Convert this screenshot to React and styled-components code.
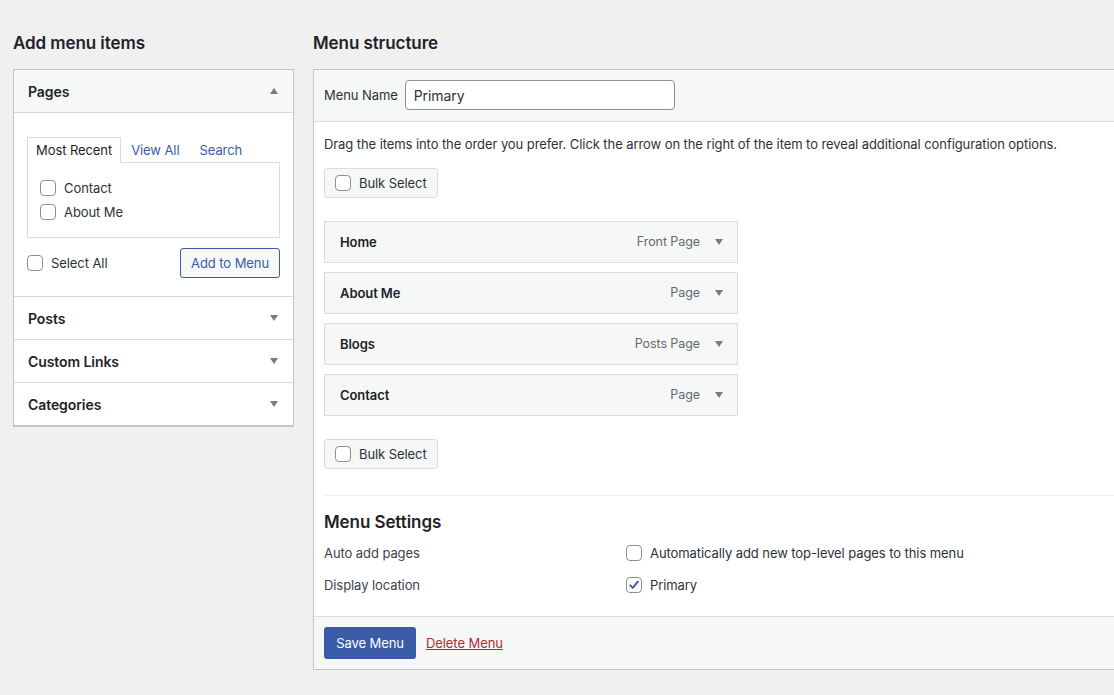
import React from "react";
import styled, { createGlobalStyle } from "styled-components";

const Global = createGlobalStyle`
  html, body { margin: 0; padding: 0; }
  body {
    background: #f0f0f1;
    font-family: Inter, "Liberation Sans", sans-serif;
    color: #1d2327;
    overflow: hidden;
    letter-spacing: -0.08px;
  }
  * { box-sizing: border-box; }
`;

const Page = styled.div`
  display: flex;
  align-items: flex-start;
  gap: 19px;
  padding: 32px 0 0 13px;
  width: 1400px;
`;

const LeftCol = styled.div`
  width: 281px;
  flex-shrink: 0;
`;

const RightCol = styled.div`
  width: 860px;
  flex-shrink: 0;
`;

const ColTitle = styled.h2`
  margin: 0 0 15px;
  font-size: 17px;
  line-height: 22px;
  font-weight: 600;
  color: #1d2327;
`;

const Accordion = styled.div`
  background: #fff;
  border: 1px solid #c3c4c7;
  border-bottom-width: 2px;
`;

const Section = styled.div`
  & + & { border-top: 1px solid #dcdcde; }
`;

const SectionHead = styled.div`
  height: ${p => (p.$open ? 43 : 42)}px;
  display: flex;
  align-items: center;
  justify-content: space-between;
  padding: 0 14px;
  font-size: 14px;
  font-weight: 600;
  background: ${p => (p.$open ? "#f6f7f7" : "#fff")};
  border-bottom: ${p => (p.$open ? "1px solid #dcdcde" : "none")};
`;

const Tri = styled.span`
  width: 0;
  height: 0;
  border-left: 4.5px solid transparent;
  border-right: 4.5px solid transparent;
  ${p => (p.$up
    ? "border-bottom: 6px solid #787c82;"
    : "border-top: 6px solid #787c82;")}
  margin-right: ${p => p.$mr || 1}px;
`;

const SectionBody = styled.div`
  padding: 24px 13px 18px;
`;

const Tabs = styled.div`
  display: flex;
  align-items: flex-end;
`;

const Tab = styled.span`
  font-size: 13px;
  line-height: 24px;
  padding: 0 8px;
  color: ${p => (p.$active ? "#1d2327" : "#3a5ca8")};
  background: ${p => (p.$active ? "#fff" : "transparent")};
  border: 1px solid ${p => (p.$active ? "#dcdcde" : "transparent")};
  border-bottom: none;
  margin-bottom: -1px;
  position: relative;
  z-index: 1;
  height: 26px;
  margin-right: ${p => (p.$active ? 1 : 2)}px;
`;

const TabPanel = styled.div`
  border: 1px solid #dcdcde;
  padding: 17px 12px 17px;
  display: flex;
  flex-direction: column;
  gap: 8px;
`;

const CheckRow = styled.label`
  display: flex;
  align-items: center;
  gap: 8px;
  font-size: 13px;
  line-height: 16px;
  color: ${p => p.$color || "#2c3338"};
`;

const Box = styled.span`
  width: 16px;
  height: 16px;
  border: 1px solid #8c8f94;
  border-radius: 4px;
  background: #fff;
  flex-shrink: 0;
  display: inline-flex;
  align-items: center;
  justify-content: center;
`;

const Check = ({ checked }) => (
  <Box>
    {checked && (
      <svg width="12" height="12" viewBox="0 0 12 12">
        <path d="M2.2 6.3 L4.8 8.9 L9.8 2.6" fill="none" stroke="#3a5ca8" strokeWidth="1.9" strokeLinecap="round" strokeLinejoin="round" />
      </svg>
    )}
  </Box>
);

const PanelFoot = styled.div`
  margin-top: 10px;
  display: flex;
  align-items: center;
  justify-content: space-between;
`;

const OutlineButton = styled.button`
  height: 30px;
  padding: 0 10px;
  font-family: inherit;
  letter-spacing: inherit;
  font-size: 13px;
  color: #3a5ca8;
  background: #f6f7f7;
  border: 1px solid #3a5ca8;
  border-radius: 3px;
`;

const Panel = styled.div`
  background: #fff;
  border: 1px solid #c3c4c7;
  border-right: none;
`;

const PanelHead = styled.div`
  height: 52px;
  display: flex;
  align-items: center;
  gap: 7px;
  padding: 0 10px 1px;
  background: #f6f7f7;
  border-bottom: 1px solid #dcdcde;
  font-size: 13px;
  color: #2c3338;
`;

const NameInput = styled.div`
  width: 270px;
  height: 30px;
  border: 1px solid #8c8f94;
  border-radius: 4px;
  background: #fff;
  display: flex;
  align-items: center;
  padding: 0 8px;
  font-size: 14px;
  color: #2c3338;
`;

const PanelBody = styled.div`
  padding: 12px 10px 0;
`;

const Hint = styled.p`
  margin: 0 0 14px;
  font-size: 13px;
  line-height: 20px;
  color: #2c3338;
`;

const BulkButton = styled.div`
  display: inline-flex;
  align-items: center;
  gap: 8px;
  height: 30px;
  padding: 0 10px;
  background: #f6f7f7;
  border: 1px solid #dcdcde;
  border-radius: 3px;
  font-size: 13px;
  color: #2c3338;
`;

const ItemList = styled.div`
  display: flex;
  flex-direction: column;
  gap: 9px;
  margin: 23px 0 23px;
`;

const Item = styled.div`
  width: 414px;
  height: 42px;
  display: flex;
  align-items: center;
  padding: 0 13px 1px 15px;
  background: #f6f7f7;
  border: 1px solid #dcdcde;
  font-size: 13px;
`;

const ItemTitle = styled.span`
  flex: 1;
  font-weight: 600;
  color: #1d2327;
`;

const ItemType = styled.span`
  color: #646970;
  font-size: 12.5px;
  margin-right: 15px;
`;

const Settings = styled.div`
  margin-top: 26px;
  border-top: 1px solid #f0f0f1;
  padding: 15px 0 15px;
`;

const SettingsTitle = styled.h3`
  margin: 0 0 4px;
  font-size: 17px;
  line-height: 22px;
  font-weight: 600;
  color: #1d2327;
`;

const SettingRow = styled.div`
  display: grid;
  grid-template-columns: 302px 1fr;
  align-items: center;
  height: 32px;
  font-size: 13px;
`;

const SettingLabel = styled.span`
  color: #3c434a;
`;

const Footer = styled.div`
  height: 53px;
  display: flex;
  align-items: center;
  gap: 10px;
  padding: 0 10px;
  background: #f6f7f7;
  border-top: 1px solid #dcdcde;
`;

const PrimaryButton = styled.button`
  height: 32px;
  width: 92px;
  font-family: inherit;
  letter-spacing: inherit;
  font-size: 13px;
  color: #fff;
  background: #3a5ca8;
  border: none;
  border-radius: 3px;
`;

const DangerLink = styled.a`
  font-size: 13px;
  color: #b32d2e;
  text-decoration: underline;
`;

const collapsed = ["Posts", "Custom Links", "Categories"];
const items = [
  ["Home", "Front Page"],
  ["About Me", "Page"],
  ["Blogs", "Posts Page"],
  ["Contact", "Page"],
];

export default function App() {
  return (
    <>
      <Global />
      <Page>
        <LeftCol>
          <ColTitle>Add menu items</ColTitle>
          <Accordion>
            <Section>
              <SectionHead $open>
                Pages <Tri $up />
              </SectionHead>
              <SectionBody>
                <Tabs>
                  <Tab $active>Most Recent</Tab>
                  <Tab>View All</Tab>
                  <Tab>Search</Tab>
                </Tabs>
                <TabPanel>
                  <CheckRow><Check />Contact</CheckRow>
                  <CheckRow><Check />About Me</CheckRow>
                </TabPanel>
                <PanelFoot>
                  <CheckRow><Check />Select All</CheckRow>
                  <OutlineButton>Add to Menu</OutlineButton>
                </PanelFoot>
              </SectionBody>
            </Section>
            {collapsed.map(name => (
              <Section key={name}>
                <SectionHead>
                  {name} <Tri />
                </SectionHead>
              </Section>
            ))}
          </Accordion>
        </LeftCol>
        <RightCol>
          <ColTitle>Menu structure</ColTitle>
          <Panel>
            <PanelHead>
              Menu Name
              <NameInput>Primary</NameInput>
            </PanelHead>
            <PanelBody>
              <Hint>
                Drag the items into the order you prefer. Click the arrow on the right of the item to reveal additional configuration options.
              </Hint>
              <BulkButton><Check />Bulk Select</BulkButton>
              <ItemList>
                {items.map(([t, k]) => (
                  <Item key={t}>
                    <ItemTitle>{t}</ItemTitle>
                    <ItemType>{k}</ItemType>
                    <Tri $mr={0} />
                  </Item>
                ))}
              </ItemList>
              <BulkButton><Check />Bulk Select</BulkButton>
              <Settings>
                <SettingsTitle>Menu Settings</SettingsTitle>
                <SettingRow>
                  <SettingLabel>Auto add pages</SettingLabel>
                  <CheckRow><Check />Automatically add new top-level pages to this menu</CheckRow>
                </SettingRow>
                <SettingRow>
                  <SettingLabel>Display location</SettingLabel>
                  <CheckRow><Check checked />Primary</CheckRow>
                </SettingRow>
              </Settings>
            </PanelBody>
            <Footer>
              <PrimaryButton>Save Menu</PrimaryButton>
              <DangerLink>Delete Menu</DangerLink>
            </Footer>
          </Panel>
        </RightCol>
      </Page>
    </>
  );
}
